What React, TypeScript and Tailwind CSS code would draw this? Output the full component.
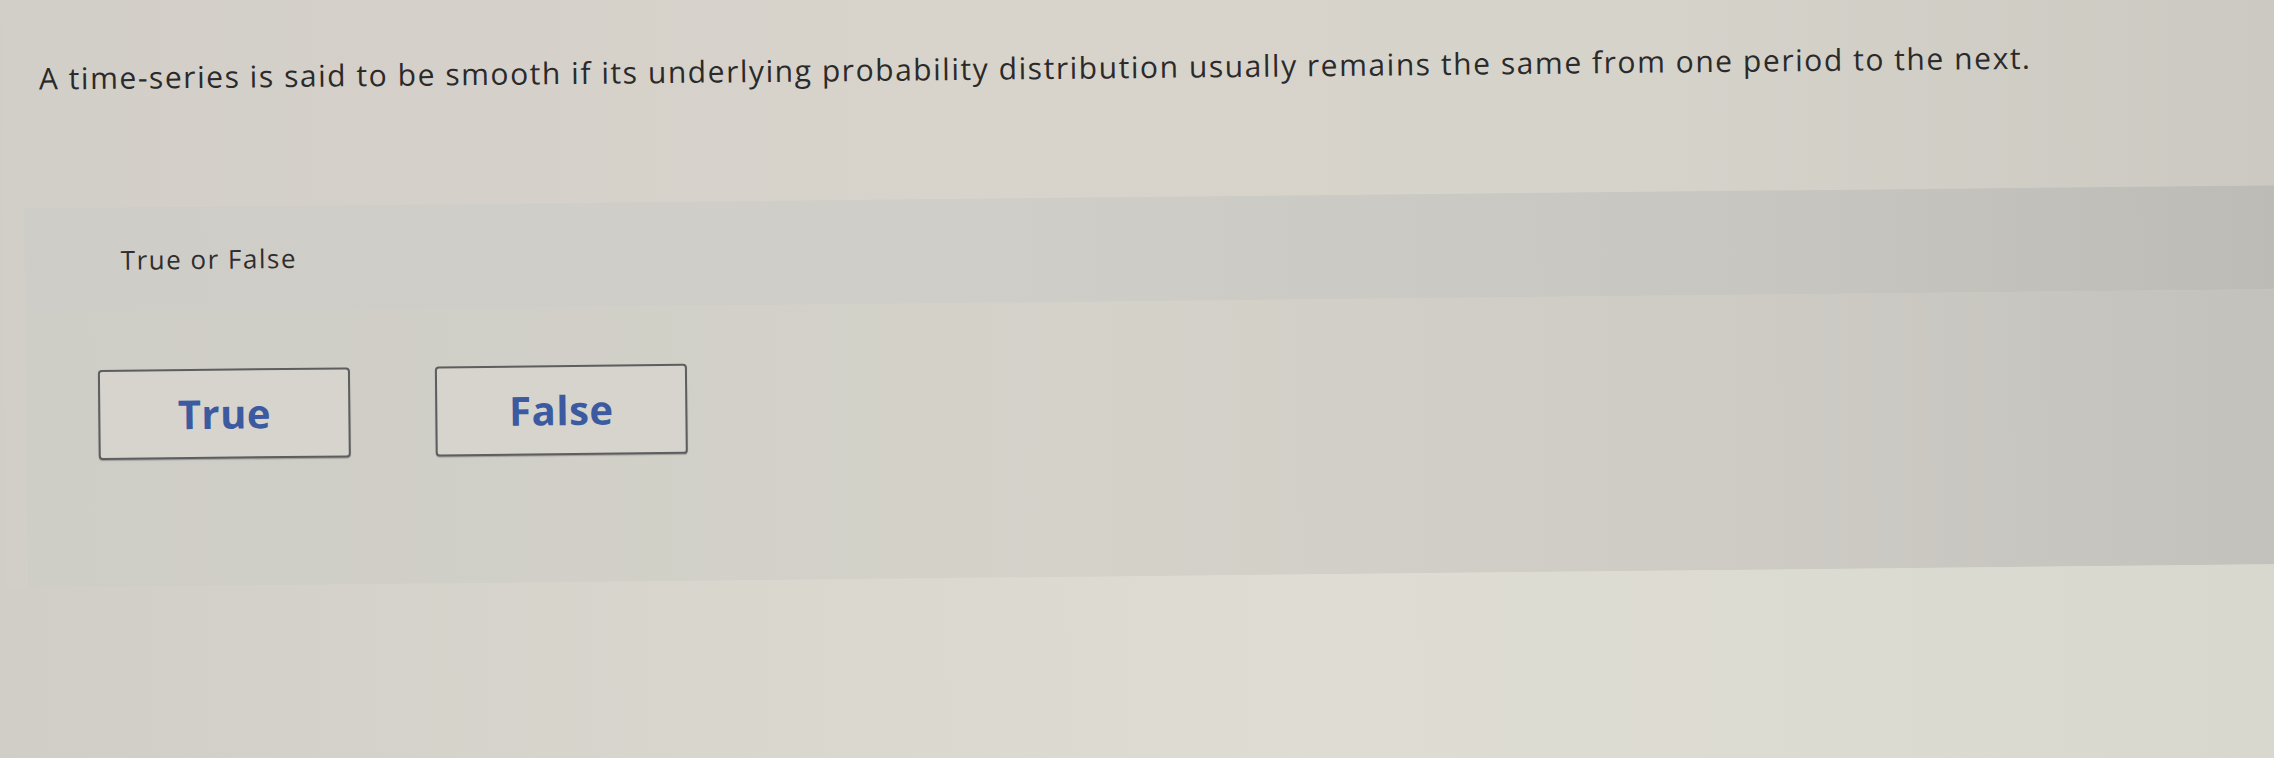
import React from "react";

const sans = '"Open Sans", "Liberation Sans", sans-serif';

function ChoiceButton({ label }: { label: string }) {
  return (
    <button
      type="button"
      className="flex h-[90px] w-[252px] items-center justify-center rounded-[4px] border-2 border-[#5e5e60] bg-[#d6d4cd] text-[40px] font-bold tracking-[0.5px] text-[#3b5aa0] shadow-[0_1px_1px_rgba(60,60,60,0.35)]"
      style={{ fontFamily: sans }}
    >
      {label}
    </button>
  );
}

export default function App() {
  return (
    <div className="relative h-[758px] w-[2274px] overflow-hidden bg-[linear-gradient(90deg,#d0cec7_0%,#d8d6ce_35%,#dfded4_60%,#d9d8cf_100%)]">
      <div
        className="flex h-[800px] w-[2340px] origin-top-left rotate-[-0.6deg] flex-col"
        style={{ fontFamily: sans }}
      >
        <div className="bg-[linear-gradient(90deg,#d2cec8_0%,#d8d4cc_40%,#d6d3cb_70%,#cbc8c1_100%)] pb-[110px]">
          <p className="pl-[38px] pt-[59px] text-[30px] leading-[40px] tracking-[1.55px] text-[#2b2a2a]">
            A time-series is said to be smooth if its underlying probability distribution usually remains the same from one period to the next.
          </p>
        </div>

        <section className="flex bg-[linear-gradient(90deg,#d2cec8_0%,#d2cec8_100%)]">
          <div className="ml-[22px] flex-1">
            <div className="flex h-[104px] items-center bg-[linear-gradient(90deg,#cecdc8_0%,#d0cec8_40%,#c8c6c0_75%,#bcbab5_100%)] pl-[96px]">
              <span className="text-[26px] tracking-[1.5px] text-[#2f2e2e]">True or False</span>
            </div>
            <div className="flex h-[275px] items-start gap-[85px] bg-[linear-gradient(90deg,#cecdc6_0%,#d4d2c9_45%,#cdcbc4_75%,#c2c0bb_100%)] pl-[72px] pt-[58px]">
              <ChoiceButton label="True" />
              <ChoiceButton label="False" />
            </div>
          </div>
        </section>

        <div className="flex-1 bg-[linear-gradient(90deg,#d0cec7_0%,#d8d6cd_30%,#dfddd3_55%,#dcdbd1_80%,#d8d7ce_100%)]" />
      </div>
    </div>
  );
}
